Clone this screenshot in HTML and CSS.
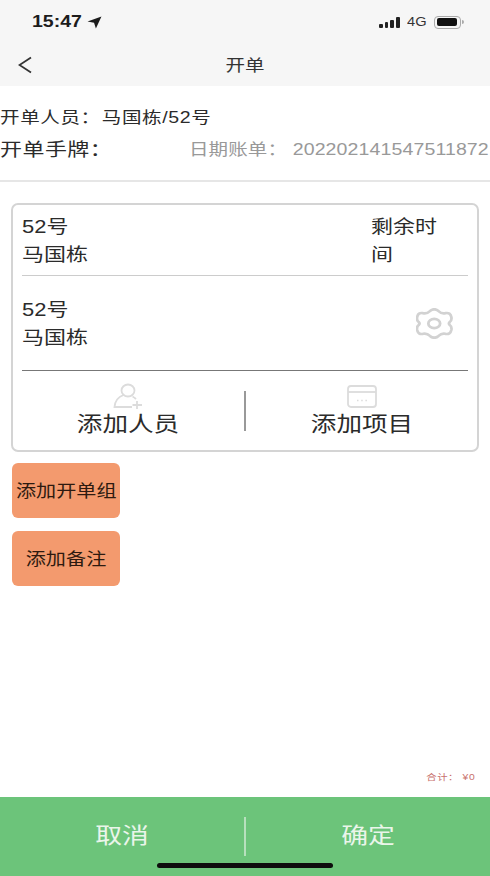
FILE: index.html
```html
<!DOCTYPE html>
<html lang="zh">
  <head>
    <meta charset="utf-8" />
    <title>开单</title>
    <link rel="stylesheet" href="styles.css">
  </head>
  <body>
    <main class="page">
      <header class="top">
        <div class="status-bar">
          <div class="status-left">
            <span class="clock">15:47</span>
            <svg class="arrow-icon" viewBox="0 0 16 14"><path d="M15.5 0.5 L0.5 6 L7.5 7.2 L9.5 13.5 Z" /></svg>
          </div>
          <div class="status-right">
            <div class="signal">
              <span class="bar bar-1"></span>
              <span class="bar bar-2"></span>
              <span class="bar bar-3"></span>
              <span class="bar bar-4"></span>
            </div>
            <span class="network">4G</span>
            <div class="battery"><span class="battery-fill"></span></div>
            <span class="battery-cap"></span>
          </div>
        </div>
        <nav class="nav-bar">
          <svg class="back-icon" viewBox="0 0 14 18"><path d="M13 1.5 L1.5 9 L13 16.5" /></svg>
          <h1 class="nav-title">开单</h1>
        </nav>
      </header>

      <section class="info">
        <div class="info-person">开单人员： 马国栋/52号</div>
        <div class="info-row">
          <span class="info-plate">开单手牌：</span>
          <span class="info-date">日期账单： 202202141547511872</span>
        </div>
      </section>

      <section class="card">
        <div class="card-row card-head">
          <div class="staff">
            <div>52号</div>
            <div>马国栋</div>
          </div>
          <div class="remaining">剩余时间</div>
        </div>
        <div class="card-row card-body">
          <div class="staff">
            <div>52号</div>
            <div>马国栋</div>
          </div>
          <svg class="gear-icon" viewBox="1.5 0.5 34.5 30" preserveAspectRatio="none">
            <path d="M14.5 3.5 Q18.5 0 22.5 3.5 Q25.5 6.5 29 5.5 Q33.5 4.5 34.5 9.5 Q35 12.5 33 14 Q31.5 15.5 33 17 Q35 18.5 34.5 21.5 Q33.5 26.5 29 25.5 Q25.5 24.5 22.5 27.5 Q18.5 31 14.5 27.5 Q11.5 24.5 8 25.5 Q3.5 26.5 2.5 21.5 Q2 18.5 4 17 Q5.5 15.5 4 14 Q2 12.5 2.5 9.5 Q3.5 4.5 8 5.5 Q11.5 6.5 14.5 3.5 Z" />
            <ellipse cx="18.5" cy="15.5" rx="5.5" ry="4.5" />
          </svg>
        </div>
        <div class="card-actions">
          <div class="action action-left">
            <svg class="action-icon" viewBox="0 0 30 26">
              <ellipse cx="15" cy="7.5" rx="6.5" ry="6" />
              <path d="M10.5 12 C5 14 2 18 1.5 24 H19" />
              <path d="M19.5 13.5 C21 14.2 22 15 23 16" />
              <path d="M24 18 V26 M19.5 22 H29" />
            </svg>
            <span class="action-label">添加人员</span>
          </div>
          <div class="action-line"></div>
          <div class="action action-right">
            <svg class="action-icon" viewBox="0 0 30 26">
              <rect x="1" y="3" width="28" height="21" rx="3" />
              <path d="M1 9 H29" />
              <path class="dots" d="M10 17.5 H11.5 M14.2 17.5 H15.7 M18.4 17.5 H19.9" />
            </svg>
            <span class="action-label">添加项目</span>
          </div>
        </div>
      </section>

      <div class="buttons">
        <div class="orange-button"><span>添加开单组</span></div>
        <div class="orange-button"><span>添加备注</span></div>
      </div>

      <div class="total">合计： ¥0</div>

      <footer class="footer">
        <div class="footer-item"><span>取消</span></div>
        <div class="footer-line"></div>
        <div class="footer-item"><span>确定</span></div>
        <div class="home-bar"></div>
      </footer>
    </main>
  </body>
</html>
```

FILE: styles.css
```css
* {
  box-sizing: border-box;
}

html,
body {
  margin: 0;
  background-color: #fff;
}

body {
  font-family: "Liberation Sans", "Noto Sans CJK SC", sans-serif;
  color: #2b2b2b;
}

.page {
  width: 490px;
  height: 876px;
  display: flex;
  flex-direction: column;
  overflow: hidden;
}

.clock,
.network,
.nav-title,
.info-person,
.info-plate,
.info-date,
.staff,
.remaining,
.action-label,
.orange-button span,
.footer-item span,
.total {
  transform: scaleX(1.22);
}

/* top */

.top {
  height: 86px;
  background-color: #f6f6f6;
  padding-top: 10px;
}

.status-bar {
  height: 24px;
  display: flex;
  justify-content: space-between;
  align-items: center;
  padding: 0 26px 0 32px;
}

.status-left,
.status-right {
  display: flex;
  align-items: center;
}

.clock {
  font-size: 16px;
  font-weight: bold;
  color: #1c1c1c;
  transform-origin: left center;
}

.arrow-icon {
  width: 15px;
  height: 13px;
  margin-left: 14px;
  fill: #1c1c1c;
}

.signal {
  display: flex;
  align-items: flex-end;
  gap: 2px;
  height: 11px;
}

.bar {
  width: 3.75px;
  background-color: #222;
  border-radius: 1px;
}

.bar-1 { height: 4px; }
.bar-2 { height: 6px; }
.bar-3 { height: 8px; }
.bar-4 { height: 11px; }

.network {
  font-size: 12px;
  margin-left: 7px;
  color: #333;
  transform-origin: left center;
}

.battery {
  width: 27px;
  height: 13px;
  margin-left: 11px;
  border: 1px solid #aaa;
  border-radius: 4px;
  padding: 1.5px 2px;
}

.battery-fill {
  display: block;
  width: 20px;
  height: 100%;
  background-color: #111;
  border-radius: 2px;
}

.battery-cap {
  width: 2px;
  height: 4px;
  margin-left: 1px;
  background-color: #aaa;
  border-radius: 0 2px 2px 0;
}

.nav-bar {
  height: 52px;
  position: relative;
  display: flex;
  justify-content: center;
  align-items: center;
  padding-top: 8px;
}

.back-icon {
  position: absolute;
  left: 18px;
  top: 22px;
  width: 14px;
  height: 18px;
  fill: none;
  stroke: #333;
  stroke-width: 1.8;
}

.nav-title {
  margin: 0;
  font-size: 16px;
  font-weight: normal;
  color: #333;
}

/* info */

.info {
  height: 96px;
  border-bottom: 2px solid #e6e6e6;
  padding-top: 19px;
}

.info-person {
  font-size: 16px;
  letter-spacing: 0.5px;
  word-spacing: -4px;
  line-height: 26px;
  white-space: nowrap;
  transform-origin: left center;
}

.info-row {
  display: flex;
  justify-content: space-between;
  align-items: center;
  margin-top: 4px;
  padding-right: 1px;
  height: 26px;
  white-space: nowrap;
}

.info-plate {
  font-size: 18px;
  letter-spacing: 0.4px;
  transform-origin: left center;
}

.info-date {
  font-size: 16px;
  letter-spacing: 0.1px;
  color: #999;
  transform-origin: right center;
}

/* card */

.card {
  height: 249px;
  margin: 21px 11px 0;
  border: 2px solid #d4d4d4;
  border-radius: 7px;
  padding: 0 9px;
}

.card-row {
  display: flex;
  justify-content: space-between;
  font-size: 18px;
  line-height: 28px;
}

.staff,
.remaining {
  transform-origin: left center;
}

.card-head {
  height: 71px;
  padding-top: 8px;
  border-bottom: 1px solid #ccc;
}

.card-body {
  height: 95px;
  align-items: flex-start;
  padding-top: 20px;
  border-bottom: 1px solid #777;
}

.remaining {
  width: 56px;
  margin-right: 41px;
}

.gear-icon {
  width: 37px;
  height: 31px;
  margin: 12px 15px 0 0;
  fill: none;
  stroke: #d2d2d2;
  stroke-width: 2.6;
}

.card-actions {
  height: 79px;
  display: flex;
  align-items: center;
}

.action {
  flex: 1;
  display: flex;
  flex-direction: column;
  align-items: center;
}

.action-left {
  padding-right: 10px;
}

.action-right {
  padding-left: 10px;
}

.action-icon {
  width: 30px;
  height: 26px;
  fill: none;
  stroke: #dcdcdc;
  stroke-width: 1.8;
}

.action-label {
  font-size: 21px;
  line-height: 28px;
  margin-top: 1px;
}

.dots {
  stroke-width: 1.3;
}

.action-line {
  width: 2px;
  height: 40px;
  background-color: #999;
}

/* buttons */

.buttons {
  display: flex;
  flex-direction: column;
  align-items: flex-start;
  gap: 13px;
  margin: 11px 0 0 12px;
}

.orange-button {
  width: 108px;
  height: 55px;
  display: flex;
  justify-content: center;
  align-items: center;
  padding-bottom: 2px;
  background-color: #f39a6e;
  border-radius: 6px;
  font-size: 16.5px;
  color: #2e1a10;
  white-space: nowrap;
}

/* total */

.total {
  margin-top: auto;
  padding: 0 12px 13px 0;
  text-align: right;
  font-size: 8.5px;
  letter-spacing: 0.5px;
  line-height: 14px;
  color: #c8706c;
  transform-origin: right center;
}

/* footer */

.footer {
  height: 79px;
  position: relative;
  display: flex;
  align-items: flex-start;
  padding-top: 20px;
  background-color: #6cc47a;
}

.footer-item {
  flex: 1;
  display: flex;
  justify-content: center;
  font-size: 22px;
  line-height: 38px;
  color: #eaf5ea;
}

.footer-line {
  width: 2px;
  height: 39px;
  background-color: #b7e0bd;
}

.home-bar {
  position: absolute;
  left: 157px;
  bottom: 8px;
  width: 176px;
  height: 5px;
  background-color: #0d0d0d;
  border-radius: 3px;
}
```
